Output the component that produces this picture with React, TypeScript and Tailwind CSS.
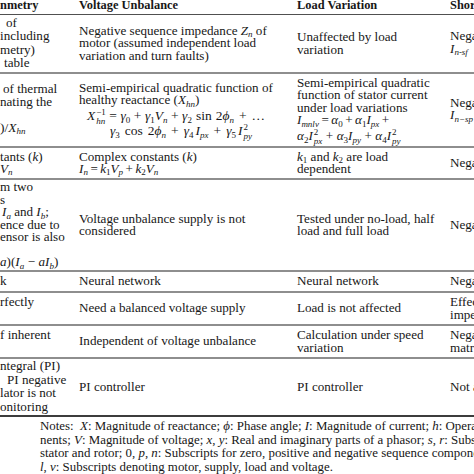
import React from "react";

type P = { children?: React.ReactNode; className?: string };

const L = ({ children, className = "" }: P) => (
  <div className={"whitespace-nowrap h-[12.5px] leading-[12.5px] " + className}>{children}</div>
);

const Stack = ({ sup, sub }: { sup: React.ReactNode; sub: React.ReactNode }) => (
  <span className="inline-flex flex-col align-[5px] text-[9px] leading-[9px] ml-[1px]">
    <span>{sup}</span>
    <span className="italic">{sub}</span>
  </span>
);

const S = ({ children }: P) => <sub className="text-[9px]">{children}</sub>;
const Si = ({ children }: P) => (
  <sub className="text-[9px]">
    <i>{children}</i>
  </sub>
);
const Op = ({ children }: P) => <span className="px-[3.5px]">{children}</span>;
const Ow = ({ children }: P) => <span className="px-[5px]">{children}</span>;
const Ob = ({ children }: P) => <span className="px-[2.5px]">{children}</span>;

const Cell = ({ children, className = "" }: P) => (
  <div className={"flex flex-col justify-center " + className}>{children}</div>
);

type RowProps = { h: string; border: string; c1: React.ReactNode; c2: React.ReactNode; c3: React.ReactNode; c4: React.ReactNode };

const Row = ({ h, border, c1, c2, c3, c4 }: RowProps) => (
  <div className={"grid grid-cols-[79px_218px_153px_minmax(0,1fr)] " + h + " " + border}>
    <Cell>{c1}</Cell>
    <Cell>{c2}</Cell>
    <Cell>{c3}</Cell>
    <Cell>{c4}</Cell>
  </div>
);

export default function App() {
  const sep = "border-b-2 border-[#8e8e8e]";
  return (
    <div className="w-[474px] h-[474px] overflow-hidden bg-white text-[#171717] font-['Liberation_Serif',serif] text-[13.1px]">
      {/* header */}
      <div className="grid grid-cols-[79px_218px_153px_minmax(0,1fr)] h-[15px] border-b border-[#505050] font-bold text-[12.4px] leading-[11px]">
        <div className="whitespace-nowrap">nmetry</div>
        <div className="whitespace-nowrap">Voltage Unbalance</div>
        <div className="whitespace-nowrap">Load Variation</div>
        <div className="whitespace-nowrap">Short Circuit</div>
      </div>

      <Row
        h="h-[59px]"
        border={sep}
        c1={
          <>
            <L className="h-[13.3px] pl-[6px]">of</L>
            <L className="h-[13.3px]">including</L>
            <L className="h-[13.3px]">metry)</L>
            <L className="h-[13.3px] pl-[4px]">table</L>
          </>
        }
        c2={
          <>
            <L>
              Negative sequence impedance <i>Z</i>
              <Si>n</Si> of
            </L>
            <L>motor (assumed independent load</L>
            <L>variation and turn faults)</L>
          </>
        }
        c3={
          <>
            <L>Unaffected by load</L>
            <L>variation</L>
          </>
        }
        c4={
          <>
            <L>Negative sequence</L>
            <L className="h-[14px]">
              <i>I</i>
              <Si>n-sf</Si>
            </L>
          </>
        }
      />

      <Row
        h="h-[74px]"
        border={sep}
        c1={
          <>
            <L className="pl-[3px]">of thermal</L>
            <L>nating the</L>
            <L className="h-[14px]"></L>
            <L className="h-[15px] text-[13.5px]">
              )/<i>X</i>
              <Si>hn</Si>
            </L>
          </>
        }
        c2={
          <>
            <L>Semi-empirical quadratic function of</L>
            <L className="h-[14px]">
              healthy reactance (<i>X</i>
              <Si>hn</Si>)
            </L>
            <L className="h-[15px] pl-[8px] text-[13.5px]">
              <i>X</i>
              <Stack sup="−1" sub="hn" />
              <Op>=</Op>
              <i>γ</i>
              <S>0</S>
              <Op>+</Op>
              <i>γ</i>
              <S>1</S>
              <i>V</i>
              <Si>n</Si>
              <Op>+</Op>
              <i>γ</i>
              <S>2</S>
              <span className="px-[4px]">sin</span>2<i>ϕ</i>
              <Si>n</Si>
              <Ow>+</Ow>…
            </L>
            <L className="h-[15px] pl-[31px] text-[13.5px]">
              <i>γ</i>
              <S>3</S>
              <span className="px-[5px]">cos</span>2<i>ϕ</i>
              <Si>n</Si>
              <Ow>+</Ow>
              <i>γ</i>
              <S>4</S>
              <span className="pl-[2px]">
                <i>I</i>
              </span>
              <Si>px</Si>
              <Ow>+</Ow>
              <i>γ</i>
              <S>5</S>
              <span className="pl-[2px]">
                <i>I</i>
              </span>
              <Stack sup="2" sub="py" />
            </L>
          </>
        }
        c3={
          <>
            <L>Semi-empirical quadratic</L>
            <L>function of stator current</L>
            <L>under load variations</L>
            <L className="h-[14px]">
              <i>I</i>
              <Si>mnlv</Si>
              <Ob>=</Ob>
              <i>α</i>
              <S>0</S>
              <Ob>+</Ob>
              <i>α</i>
              <S>1</S>
              <i>I</i>
              <Si>px</Si>
              <Ob>+</Ob>
            </L>
            <L className="h-[15px]">
              <i>α</i>
              <S>2</S>
              <i>I</i>
              <Stack sup="2" sub="px" />
              <Op>+</Op>
              <i>α</i>
              <S>3</S>
              <i>I</i>
              <Si>py</Si>
              <Op>+</Op>
              <i>α</i>
              <S>4</S>
              <i>I</i>
              <Stack sup="2" sub="py" />
            </L>
          </>
        }
        c4={
          <>
            <L>Negative sequence</L>
            <L className="h-[14px]">
              <i>I</i>
              <Si>n−sp</Si>
            </L>
          </>
        }
      />

      <Row
        h="h-[32px]"
        border={sep}
        c1={
          <>
            <L>tants (<i>k</i>)</L>
            <L>
              <i>V</i>
              <Si>n</Si>
            </L>
          </>
        }
        c2={
          <>
            <L>Complex constants (<i>k</i>)</L>
            <L>
              <i>I</i>
              <Si>n</Si>
              <Ob>=</Ob>
              <i>k</i>
              <S>1</S>
              <i>V</i>
              <Si>p</Si>
              <Ob>+</Ob>
              <i>k</i>
              <S>2</S>
              <i>V</i>
              <Si>n</Si>
            </L>
          </>
        }
        c3={
          <>
            <L>
              <i>k</i>
              <S>1</S> and <i>k</i>
              <S>2</S> are load
            </L>
            <L>dependent</L>
          </>
        }
        c4={<L>Negative sequence</L>}
      />

      <Row
        h="h-[92px]"
        border={sep}
        c1={
          <>
            <L>m two</L>
            <L>s</L>
            <L className="pl-[2px]">
              <i>I</i>
              <Si>a</Si> and <i>I</i>
              <Si>b</Si>;
            </L>
            <L>ence due to</L>
            <L>ensor is also</L>
            <L></L>
            <L>
              <i>a</i>)(<i>I</i>
              <Si>a</Si>
              <Op>−</Op>
              <i>aI</i>
              <Si>b</Si>)
            </L>
          </>
        }
        c2={
          <>
            <L>Voltage unbalance supply is not</L>
            <L>considered</L>
          </>
        }
        c3={
          <>
            <L>Tested under no-load, half</L>
            <L>load and full load</L>
          </>
        }
        c4={<L>Negative sequence</L>}
      />

      <Row
        h="h-[21px]"
        border={sep}
        c1={<L>k</L>}
        c2={<L>Neural network</L>}
        c3={<L>Neural network</L>}
        c4={<L>Negative sequence</L>}
      />

      <Row
        h="h-[33px]"
        border={sep}
        c1={
          <>
            <L>rfectly</L>
            <L></L>
          </>
        }
        c2={<L>Need a balanced voltage supply</L>}
        c3={<L>Load is not affected</L>}
        c4={
          <>
            <L>Effective negative</L>
            <L>impedance</L>
          </>
        }
      />

      <Row
        h="h-[33px]"
        border={sep}
        c1={
          <>
            <L>f inherent</L>
            <L></L>
          </>
        }
        c2={<L>Independent of voltage unbalance</L>}
        c3={
          <>
            <L>Calculation under speed</L>
            <L>variation</L>
          </>
        }
        c4={
          <>
            <L>Negative sequence</L>
            <L>matrix</L>
          </>
        }
      />

      <Row
        h="h-[58px]"
        border="border-b-2 border-[#3c3c3c]"
        c1={
          <>
            <L className="h-[13.5px]">ntegral (PI)</L>
            <L className="h-[13.5px] pl-[7px]">PI negative</L>
            <L className="h-[13.5px]">lator is not</L>
            <L className="h-[13.5px]">onitoring</L>
          </>
        }
        c2={<L>PI controller</L>}
        c3={<L>PI controller</L>}
        c4={<L>Not applicable</L>}
      />

      {/* notes */}
      <div className="pl-[40px] pt-[3px] leading-[13.5px] text-[12.9px]">
        <div className="whitespace-nowrap h-[13.5px]">
          Notes:&nbsp; <i>X</i>: Magnitude of reactance; <i>ϕ</i>: Phase angle; <i>I</i>: Magnitude of current; <i>h</i>: Operating
          frequency; compo-
        </div>
        <div className="whitespace-nowrap h-[13.5px]">
          nents; <i>V</i>: Magnitude of voltage; <i>x</i>, <i>y</i>: Real and imaginary parts of a phasor; <i>s</i>, <i>r</i>:
          Subscripts for
        </div>
        <div className="whitespace-nowrap h-[13.5px]">
          stator and rotor; 0, <i>p</i>, <i>n</i>: Subscripts for zero, positive and negative sequence components; <i>m</i>,{" "}
          <i>s</i>,
        </div>
        <div className="whitespace-nowrap h-[13.5px]">
          <i>l</i>, <i>v</i>: Subscripts denoting motor, supply, load and voltage.
        </div>
      </div>
    </div>
  );
}
